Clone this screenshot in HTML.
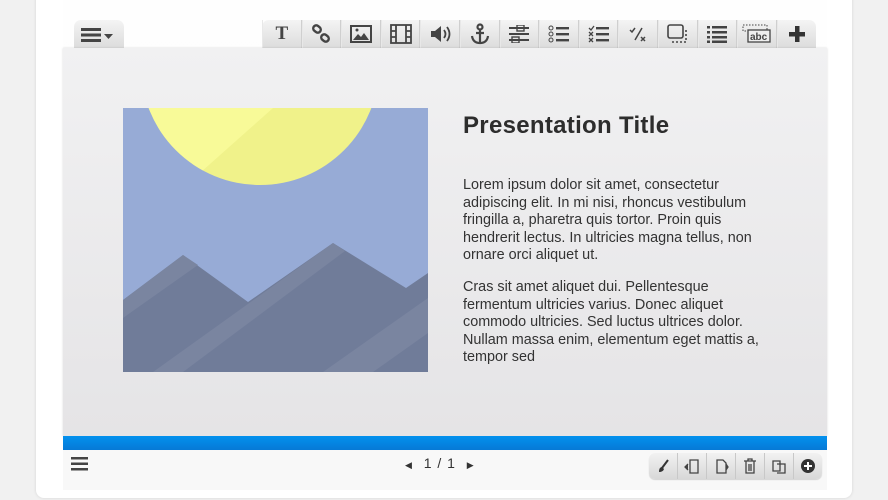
<!DOCTYPE html>
<html><head><meta charset="utf-8"><style>
*{margin:0;padding:0;box-sizing:border-box}
body{width:888px;height:500px;background:#f1f1f1;position:relative;overflow:hidden;font-family:"Liberation Sans",sans-serif}
.card{position:absolute;left:36px;top:-10px;width:816px;height:508px;background:#fff;border-radius:8px;box-shadow:0 0 3px rgba(0,0,0,.12)}
.inner{position:absolute;left:63px;top:0;width:764px;height:490px;background:linear-gradient(#fefefe,#f8f8f8)}
.slide{position:absolute;left:63px;top:48px;width:764px;height:388px;background:linear-gradient(#f1f1f2,#e5e4e6);box-shadow:0 0 2px rgba(0,0,0,.15)}
.blue{position:absolute;left:63px;top:436px;width:764px;height:14px;background:linear-gradient(#0391ee,#0679d6)}
.tb{position:absolute;top:20px;height:28px;display:flex;background:linear-gradient(#f4f4f4,#dcdcdc);border-radius:7px 7px 0 0}
.tb div{width:39.6px;height:28px;border-left:1px solid #e8e8e8;border-right:1px solid #cfcfcf;display:flex;align-items:center;justify-content:center}
.tb svg{display:block}
.menu{position:absolute;left:74px;top:20px;width:50px;height:28px;background:linear-gradient(#f4f4f4,#dcdcdc);border-radius:7px 7px 0 0}
.txt{position:absolute;left:463px;top:112px;width:360px;color:#333;font-size:14.4px;line-height:17.6px;white-space:nowrap}
h1{font-size:24px;font-weight:bold;color:#2d2d2d;line-height:28px;margin-bottom:37px;letter-spacing:.3px}
p{margin-bottom:14px}
.bb{position:absolute;left:649px;top:453px;width:173px;height:26px;background:linear-gradient(#f2f2f2,#d8d8d8);border-radius:6px;display:flex;box-shadow:0 1px 1px rgba(0,0,0,.15)}
.bb div{flex:1;border-right:1px solid #c8c8c8;display:flex;align-items:center;justify-content:center}
.bb div:last-child{border:none}
</style></head><body>
<div class="card"></div>
<div class="inner"></div>
<div class="menu"><svg width="50" height="28"><g fill="#444"><rect x="7" y="8" width="20" height="3"/><rect x="7" y="13.5" width="20" height="3"/><rect x="7" y="19" width="20" height="3"/><path d="M30 14h9l-4.5 5z"/></g></svg></div>
<div class="tb" style="left:262px">
<div><span style="font:bold 19px 'Liberation Serif',serif;color:#444">T</span></div>
<div><svg width="22" height="22" fill="none" stroke="#444" stroke-width="2.4"><rect x="3" y="3" width="8" height="6" rx="3" transform="rotate(40 7 6)"/><rect x="11" y="12" width="8" height="6" rx="3" transform="rotate(40 15 15)"/></svg></div>
<div><svg width="22" height="20"><rect x="1" y="2" width="20" height="16" fill="none" stroke="#444" stroke-width="2"/><path d="M3 16l5-6 3 3 3-4 5 7z" fill="#444"/><circle cx="7" cy="6" r="1.5" fill="#444"/></svg></div>
<div><svg width="22" height="20" fill="none" stroke="#444" stroke-width="1.8"><rect x="1" y="1" width="20" height="18"/><path d="M6 1v18M16 1v18M1 7h5M1 13h5M16 7h5M16 13h5"/></svg></div>
<div><svg width="22" height="20"><path d="M2 7h4l6-5v16l-6-5H2z" fill="#444"/><path d="M15 6q3 4 0 8M18 3q5 7 0 14" fill="none" stroke="#444" stroke-width="1.8"/></svg></div>
<div><svg width="20" height="22" fill="none" stroke="#444" stroke-width="2.2"><circle cx="10" cy="4" r="2.5"/><path d="M10 6.5v13M6 10h8M2 13q1 7 8 7q7 0 8-7"/></svg></div>
<div><svg width="22" height="18" fill="#444"><rect x="1" y="2" width="20" height="2"/><rect x="1" y="8" width="20" height="2"/><rect x="1" y="14" width="20" height="2"/><rect x="9" y="0" width="7" height="6" fill="none" stroke="#444" stroke-width="1.4"/><rect x="4" y="12" width="7" height="6" fill="none" stroke="#444" stroke-width="1.4"/></svg></div>
<div><svg width="22" height="18" fill="#444"><circle cx="3" cy="3" r="2" fill="none" stroke="#444"/><circle cx="3" cy="9" r="2" fill="none" stroke="#444"/><circle cx="3" cy="15" r="2" fill="none" stroke="#444"/><rect x="8" y="2" width="13" height="2.4"/><rect x="8" y="8" width="13" height="2.4"/><rect x="8" y="14" width="13" height="2.4"/></svg></div>
<div><svg width="22" height="18" fill="#444"><path d="M1 3l2 2 3-4" stroke="#444" fill="none" stroke-width="1.3"/><path d="M1 7l4 4M5 7l-4 4M1 13l4 4M5 13l-4 4" stroke="#444" stroke-width="1.3"/><rect x="8" y="2" width="13" height="2.4"/><rect x="8" y="8" width="13" height="2.4"/><rect x="8" y="14" width="13" height="2.4"/></svg></div>
<div><svg width="20" height="18" stroke="#444" fill="none" stroke-width="1.5"><path d="M2 5l2 2 3-4M7 15L14 3M13 12l4 4M17 12l-4 4"/></svg></div>
<div><svg width="22" height="20" fill="none" stroke="#444" stroke-width="1.6"><rect x="1" y="1" width="15" height="13" rx="2"/><path d="M19 6v12H5" stroke-dasharray="2 2"/></svg></div>
<div><svg width="22" height="18" fill="#444"><rect x="1" y="1" width="3" height="2.5"/><rect x="6" y="1" width="15" height="2.5"/><rect x="1" y="6" width="3" height="2.5"/><rect x="6" y="6" width="15" height="2.5"/><rect x="1" y="11" width="3" height="2.5"/><rect x="6" y="11" width="15" height="2.5"/><rect x="1" y="15.5" width="3" height="2.5"/><rect x="6" y="15.5" width="15" height="2.5"/></svg></div>
<div><svg width="30" height="20"><rect x="1" y="1" width="24" height="6" fill="none" stroke="#444" stroke-dasharray="1.5 1.5"/><rect x="6" y="6" width="22" height="12" fill="#eee" stroke="#444" stroke-width="1.3"/><text x="8" y="16" font-family="Liberation Sans" font-size="10" font-weight="bold" fill="#444">abc</text></svg></div>
<div style="border-right:none"><svg width="18" height="18" fill="#333"><rect x="7" y="1" width="4.5" height="16"/><rect x="1" y="7" width="16" height="4.5"/></svg></div>
</div>
<div class="slide"></div>
<svg style="position:absolute;left:123px;top:108px" width="305" height="264">
<rect width="305" height="264" fill="#97abd6"/>
<clipPath id="c"><rect width="305" height="264"/></clipPath>
<clipPath id="s"><circle cx="137" cy="-42" r="119"/></clipPath>
<g clip-path="url(#c)">
<circle cx="137" cy="-42" r="119" fill="#f0f28a"/>
<path d="M0 0h150L60 80 0 80z" fill="#f8fa98" clip-path="url(#s)"/>
<path d="M0 192L60 147 125 194 210 135 283 180 305 165V264H0z" fill="#707c99"/>
<path d="M0 192L60 147 75 157 0 210z" fill="#7a85a0"/>
<path d="M30 264L210 135 222 143 60 264z" fill="#7a85a0"/>
<path d="M200 264L305 190V225L250 264z" fill="#7a85a0"/>
</g></svg>
<div class="txt"><h1>Presentation Title</h1>
<p>Lorem ipsum dolor sit amet, consectetur<br>adipiscing elit. In mi nisi, rhoncus vestibulum<br>fringilla a, pharetra quis tortor. Proin quis<br>hendrerit lectus. In ultricies magna tellus, non<br>ornare orci aliquet ut.</p>
<p>Cras sit amet aliquet dui. Pellentesque<br>fermentum ultricies varius. Donec aliquet<br>commodo ultricies. Sed luctus ultrices dolor.<br>Nullam massa enim, elementum eget mattis a,<br>tempor sed</p></div>
<div class="blue"></div>
<svg style="position:absolute;left:71px;top:457px" width="18" height="14" fill="#444"><rect y="0" width="17" height="2.5"/><rect y="5.5" width="17" height="2.5"/><rect y="11" width="17" height="2.5"/></svg>
<div style="position:absolute;left:405px;top:455px;font-size:14px;color:#333;word-spacing:2px"><span style="font-size:9px">◀</span>&nbsp; 1 / 1 &nbsp;<span style="font-size:9px">▶</span></div>
<div class="bb">
<div><svg width="12" height="14"><path d="M11 1L5 9" stroke="#333" stroke-width="2"/><path d="M5 8q-3 0-3 5 4 0 5-3z" fill="#333"/></svg></div>
<div><svg width="16" height="16" fill="none" stroke="#444" stroke-width="1.3"><path d="M6 2h8v13H6V5z"/><path d="M4 6L1 9l3 3" fill="#444"/></svg></div>
<div><svg width="16" height="16" fill="none" stroke="#444" stroke-width="1.3"><path d="M4 2h6l3 3v10H4z"/><path d="M13 6l2 3-2 3" fill="#444"/></svg></div>
<div><svg width="14" height="16" fill="none" stroke="#444" stroke-width="1.3"><path d="M1 3h12M5 3V1h4v2M3 3v12h8V3M6 6v7M8 6v7"/></svg></div>
<div><svg width="16" height="16" fill="none" stroke="#444" stroke-width="1.3"><path d="M2 3h7v10H2zM6 6h8v9H6"/></svg></div>
<div><svg width="16" height="16"><circle cx="8" cy="8" r="7" fill="#333"/><path d="M8 4v8M4 8h8" stroke="#fff" stroke-width="2"/></svg></div>
</div>
</body></html>
